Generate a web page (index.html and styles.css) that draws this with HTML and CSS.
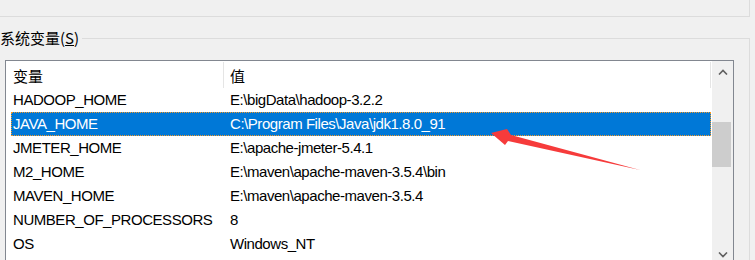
FILE: index.html
```html
<!DOCTYPE html>
<html lang="zh-CN">
<head>
  <meta charset="UTF-8">
  <title>系统变量</title>
  <link rel="stylesheet" href="styles.css">
</head>
<body>
  <!-- Upper group (user variables), only its bottom edge is visible -->
  <div class="upper-group"></div>

  <!-- System variables -->
  <fieldset class="group">
    <legend class="group-title">系统变量(<u>S</u>)</legend>

    <div class="listbox">
      <div class="list-main">
        <div class="list-header">
          <div class="col-head col-name">变量</div>
          <div class="col-head col-value">值</div>
        </div>

        <div class="row"><span>HADOOP_HOME</span><span>E:\bigData\hadoop-3.2.2</span></div>
        <div class="row selected"><span>JAVA_HOME</span><span>C:\Program Files\Java\jdk1.8.0_91</span></div>
        <div class="row"><span>JMETER_HOME</span><span>E:\apache-jmeter-5.4.1</span></div>
        <div class="row"><span>M2_HOME</span><span>E:\maven\apache-maven-3.5.4\bin</span></div>
        <div class="row"><span>MAVEN_HOME</span><span>E:\maven\apache-maven-3.5.4</span></div>
        <div class="row"><span>NUMBER_OF_PROCESSORS</span><span>8</span></div>
        <div class="row"><span>OS</span><span>Windows_NT</span></div>
      </div>

      <!-- Vertical scrollbar -->
      <div class="scrollbar">
        <div class="sb-btn">
          <svg width="10" height="6" viewBox="0 0 10 6"><polyline points="1,5.5 5,1.5 9,5.5" fill="none" stroke="#606060" stroke-width="1.6"/></svg>
        </div>
        <div class="sb-track">
          <div class="sb-thumb"></div>
        </div>
        <div class="sb-btn">
          <svg width="10" height="6" viewBox="0 0 10 6"><polyline points="1,0.5 5,4.5 9,0.5" fill="none" stroke="#606060" stroke-width="1.6"/></svg>
        </div>
      </div>
    </div>
  </fieldset>

  <!-- Red annotation arrow pointing at the JAVA_HOME value -->
  <svg class="annotation" width="755" height="260" viewBox="0 0 755 260">
    <polygon points="491,133 507,129 511,135 640,170 508,141 505,145" fill="#f63b3b"/>
  </svg>
</body>
</html>
```

FILE: styles.css
```css
body {
  margin: 0;
  background: #f0f0f0;
  font-family: "Liberation Sans", "Noto Sans CJK SC", sans-serif;
  font-size: 15px;
  color: #000000;
  overflow: hidden;
  height: 260px;
}

.upper-group {
  box-sizing: border-box;
  width: 750px;
  height: 17px;
  border-bottom: 1px solid #dcdcdc;
  border-right: 1px solid #dcdcdc;
}

/* Group box */
.group {
  box-sizing: border-box;
  width: 750px;
  margin: 11px 0 0 0;
  padding: 0;
  border: 1px solid #dcdcdc;
  border-left: none;
  border-bottom: none;
}

.group-title {
  margin-left: 0;
  padding: 0 3px 0 0;
  line-height: 20px;
  font-family: "Noto Sans CJK SC", sans-serif;
  font-size: 15px;
}

/* List view */
.listbox {
  display: flex;
  width: 729px;
  height: 206px;
  margin: 12px 0 0 5px;
  box-sizing: border-box;
  border: 1px solid #828790;
  background: #ffffff;
}

.list-main {
  flex: 1;
}

.list-header {
  display: flex;
  height: 27px;
}

.col-head {
  box-sizing: border-box;
  height: 26px;
  line-height: 28px;
  margin-top: 1px;
  border-right: 1px solid #e5e5e5;
  font-family: "Noto Sans CJK SC", sans-serif;
  font-size: 15px;
}

.col-name {
  width: 218px;
  padding-left: 7px;
}

.col-value {
  width: 487px;
  padding-left: 6px;
}

.row {
  display: grid;
  grid-template-columns: 217px 1fr;
  box-sizing: border-box;
  width: 700px;
  height: 24px;
  margin-left: 5px;
  padding-left: 1px;
  border: 1px dotted transparent;
  line-height: 22px;
  letter-spacing: -0.45px;
  white-space: nowrap;
}

.row.selected {
  background: #0078d7;
  color: #ffffff;
  border-color: #f39a2a;
}

/* Scrollbar */
.scrollbar {
  width: 21px;
  display: flex;
  flex-direction: column;
  background: #f0f0f0;
}

.sb-btn {
  height: 21px;
  display: flex;
  align-items: center;
  justify-content: center;
}

.sb-track {
  flex: 1;
  padding-top: 40px;
}

.sb-thumb {
  width: 19px;
  height: 45px;
  background: #cdcdcd;
}

.annotation {
  position: absolute;
  left: 0;
  top: 0;
  pointer-events: none;
}
```
